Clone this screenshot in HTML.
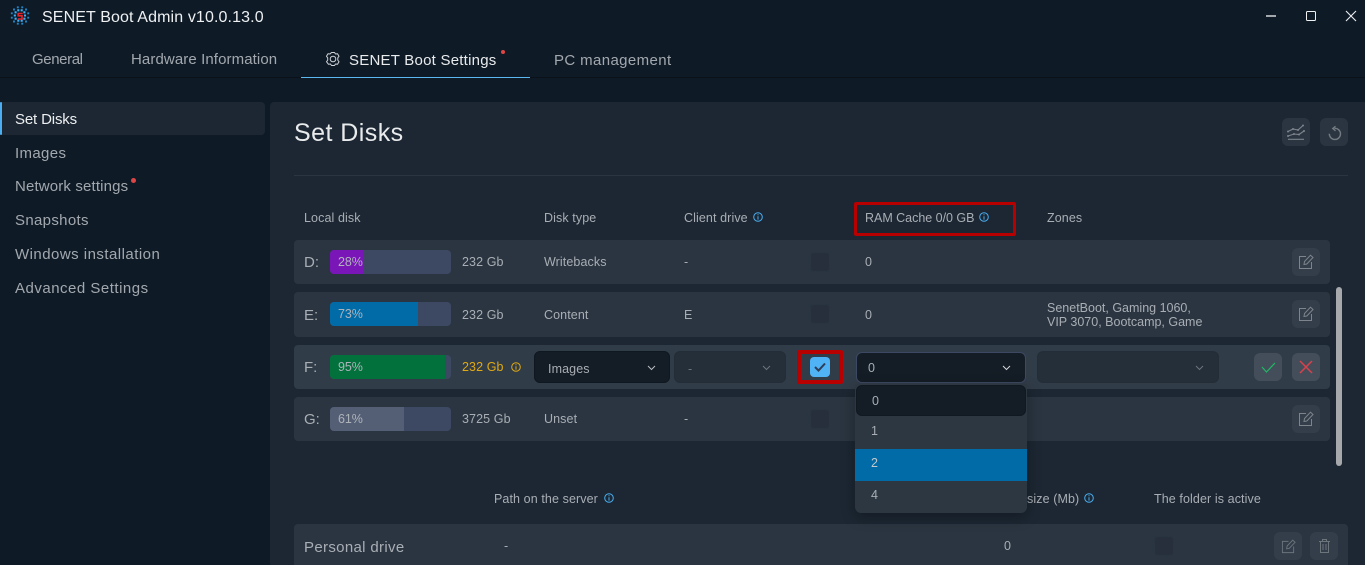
<!DOCTYPE html>
<html lang="en"><head><meta charset="utf-8"><title>SENET Boot Admin</title>
<style>
*{box-sizing:border-box}
html,body{margin:0;padding:0;width:1365px;height:565px;overflow:hidden;background:#0e1b27;font-family:"Liberation Sans",sans-serif}
.a,.t{position:absolute}
.t{white-space:nowrap;color:#a9aeb4;font-size:12.5px;line-height:16px;letter-spacing:.1px}
.m{font-size:15px;line-height:18px}
.row{position:absolute;left:294px;width:1036px;background:#2a3541;border-radius:4px}
.bar{position:absolute;left:330px;width:121px;height:24px;background:#3d4863;border-radius:4px;overflow:hidden}
.bar i{position:absolute;left:0;top:0;height:24px;display:block}
.bar b{position:absolute;left:8px;top:4px;font-weight:400;font-size:12.5px;line-height:16px;color:#aeb3ba;letter-spacing:-.05px}
.cb{position:absolute;width:20px;height:20px;border-radius:4px;background:#262f3b;border:1px solid #283440}
.btn{position:absolute;width:28px;height:28px;border-radius:6px;background:#333e4a}
.sel{position:absolute;height:32px;border-radius:6px;background:#141c25;border:1px solid #0f1720}
.sel2{background:#252f39;border-color:#232d37}
svg{position:absolute;display:block;overflow:visible}
</style></head><body>

<!-- logo -->
<svg style="left:10px;top:6px" width="20" height="20" viewBox="0 0 20 20" fill="none">
<path stroke="#3fb0f5" stroke-width="2.100" stroke-linecap="square" d="M15 9.500h.01M14.400 12.700h.01M11.700 14.700h.01M8.300 14.700h.01M5.600 12.700h.01M4.800 9.500h.01M5.600 6.300h.01M8.300 4.300h.01M11.700 4.300h.01M14.400 6.300h.01"/>
<path stroke="#1f86c8" stroke-width="1.900" stroke-linecap="square" d="M18.200 11.700h.01M16 15.500h.01M12.200 17.700h.01M7.800 17.700h.01M4 15.500h.01M1.800 11.700h.01M1.800 7.300h.01M4 3.500h.01M7.800 1.300h.01M12.200 1.300h.01M16 3.500h.01M18.200 7.300h.01"/>
<path d="M12.700 7.500H8.200V9.800H12V13H7.800" stroke="#e8242a" stroke-width="1.600"/>
</svg>
<div class="t" style="left:42px;top:8px;font-size:16px;line-height:20px;color:#eef0f2;letter-spacing:.12px">SENET Boot Admin v10.0.13.0</div>

<!-- window controls -->
<div class="a" style="left:1266px;top:15px;width:10px;height:1.500px;background:#a3a8ad"></div>
<div class="a" style="left:1306px;top:11px;width:10px;height:10px;border:1.300px solid #eef0f2;border-radius:1.500px"></div>
<svg style="left:1346px;top:11px" width="10" height="10" viewBox="0 0 10 10"><path d="M0 0L10 10M10 0L0 10" stroke="#eef0f2" stroke-width="1.100"/></svg>

<!-- tabs -->
<div class="t m" style="left:32px;top:51px;color:#a3a8ae;letter-spacing:-.4px">General</div>
<div class="t m" style="left:131px;top:51px;color:#a3a8ae;letter-spacing:.1px">Hardware Information</div>
<svg style="left:325px;top:51px" width="16" height="16" viewBox="0 0 16 16" fill="none" stroke="#cfd2d6" stroke-width="1" stroke-linejoin="round"><path d="M6.500 1.500h3l1 1.500 2-.3 1.500 2.600-1.200 1.500v2.400l1.200 1.500-1.500 2.600-2-.3-1 1.500h-3l-1-1.500-2 .3L1.500 10.700l1.200-1.500V6.800L1.500 5.300 3 2.700l2 .3z"/><circle cx="8" cy="8" r="2.800"/></svg>
<div class="t m" style="left:349px;top:52px;color:#e9ebed;letter-spacing:.23px">SENET Boot Settings</div>
<div class="a" style="left:501px;top:50px;width:4px;height:4px;border-radius:50%;background:#e04545"></div>
<div class="t m" style="left:554px;top:52px;color:#a3a8ae;letter-spacing:.38px">PC management</div>
<div class="a" style="left:0;top:77px;width:1365px;height:1px;background:#0a1118"></div>
<div class="a" style="left:301px;top:77px;width:229px;height:1px;background:#5cb8f0"></div>

<!-- sidebar -->
<div class="a" style="left:0;top:102px;width:265px;height:33px;background:#1c2733;border-radius:0 4px 4px 0"></div>
<div class="a" style="left:0;top:102px;width:2px;height:33px;background:#4aaef0;border-radius:2px"></div>
<div class="t m" style="left:15px;top:111px;color:#eceef0;letter-spacing:-.15px">Set Disks</div>
<div class="t m" style="left:15px;top:145px;letter-spacing:.35px;color:#a3a8ae">Images</div>
<div class="t m" style="left:15px;top:178px;letter-spacing:.15px;color:#a3a8ae">Network settings</div>
<div class="a" style="left:131px;top:178px;width:5px;height:5px;border-radius:50%;background:#e04545"></div>
<div class="t m" style="left:15px;top:212px;letter-spacing:.33px;color:#a3a8ae">Snapshots</div>
<div class="t m" style="left:15px;top:246px;letter-spacing:.47px;color:#a3a8ae">Windows installation</div>
<div class="t m" style="left:15px;top:280px;letter-spacing:.5px;color:#a3a8ae">Advanced Settings</div>

<!-- main panel -->
<div class="a" style="left:270px;top:102px;width:1095px;height:463px;background:#1c2733;border-radius:4px 0 0 0"></div>
<div class="t" style="left:294px;top:119px;font-size:25px;line-height:28px;color:#e8eaec;letter-spacing:.45px">Set Disks</div>
<div class="a" style="left:294px;top:175px;width:1054px;height:1px;background:#2a3541"></div>

<div class="btn" style="left:1282px;top:118px;background:#2a3541"></div>
<svg style="left:1287px;top:124px" width="18" height="16" viewBox="0 0 18 16" fill="none" stroke="#7d848c" stroke-width="1.100"><path d="M1 7.500L6 5L11 6L16 1.500"/><path d="M1 12L7 10L12 10.500L17 7"/><path d="M1 15.300H17"/><path stroke-width="2" stroke-linecap="round" d="M1 7.500h.01M6 5h.01M11 6h.01M16 1.500h.01M1 12h.01M7 10h.01M12 10.500h.01M17 7h.01"/></svg>
<div class="btn" style="left:1320px;top:118px;background:#2a3541"></div>
<svg style="left:1328px;top:126px" width="14" height="14" viewBox="0 0 14 14" fill="none" stroke="#737a82" stroke-width="1.400"><path d="M6.500 2.300A5.600 5.600 0 1 1 1.300 7.800"/><path d="M7.500 .3L4.800 2.500 7.500 4.800"/></svg>

<!-- column headers -->
<div class="t" style="left:304px;top:210px">Local disk</div>
<div class="t" style="left:544px;top:210px">Disk type</div>
<div class="t" style="left:684px;top:210px">Client drive</div>
<svg style="left:753px;top:212px" width="10" height="10" viewBox="0 0 10 10" fill="none" stroke="#4aaef0"><circle cx="5" cy="5" r="4.300"/><path d="M5 4.200V7.600M5 2.300V3.300"/></svg>
<div class="a" style="left:854px;top:202px;width:162px;height:34px;border:3px solid #b80000;border-radius:2px"></div>
<div class="t" style="left:865px;top:210px;letter-spacing:-.02px">RAM Cache 0/0 GB</div>
<svg style="left:979px;top:212px" width="10" height="10" viewBox="0 0 10 10" fill="none" stroke="#4aaef0"><circle cx="5" cy="5" r="4.300"/><path d="M5 4.200V7.600M5 2.300V3.300"/></svg>
<div class="t" style="left:1047px;top:210px">Zones</div>

<!-- rows -->
<div class="row" style="top:240px;height:44px"></div>
<div class="row" style="top:292px;height:45px"></div>
<div class="row" style="top:345px;height:44px;background:#313c49"></div>
<div class="row" style="top:397px;height:44px"></div>

<!-- D -->
<div class="t" style="left:304px;top:254px;font-size:15px;line-height:18px;letter-spacing:0">D:</div>
<div class="bar" style="top:250px"><i style="width:34px;background:#7a16b8"></i><b>28%</b></div>
<div class="t" style="left:462px;top:254px">232 Gb</div>
<div class="t" style="left:544px;top:254px">Writebacks</div>
<div class="t" style="left:684px;top:254px">-</div>
<div class="cb" style="left:810px;top:252px"></div>
<div class="t" style="left:865px;top:254px">0</div>
<div class="btn" style="left:1292px;top:248px"></div>

<!-- E -->
<div class="t" style="left:304px;top:307px;font-size:15px;line-height:18px;letter-spacing:0">E:</div>
<div class="bar" style="top:302px"><i style="width:88px;background:#006ba6"></i><b>73%</b></div>
<div class="t" style="left:462px;top:307px">232 Gb</div>
<div class="t" style="left:544px;top:307px">Content</div>
<div class="t" style="left:684px;top:307px">E</div>
<div class="cb" style="left:810px;top:304px"></div>
<div class="t" style="left:865px;top:307px">0</div>
<div class="t" style="left:1047px;top:301px;line-height:14px;letter-spacing:0">SenetBoot, Gaming 1060,<br>VIP 3070, Bootcamp, Game</div>
<div class="btn" style="left:1292px;top:300px"></div>

<!-- F -->
<div class="t" style="left:304px;top:359px;font-size:15px;line-height:18px;letter-spacing:0">F:</div>
<div class="bar" style="top:355px"><i style="width:115px;background:#02713b"></i><b>95%</b></div>
<div class="t" style="left:462px;top:359px;color:#e0a911">232 Gb</div>
<svg style="left:511px;top:362px" width="10" height="10" viewBox="0 0 10 10" fill="none" stroke="#e0a911"><circle cx="5" cy="5" r="4.300"/><path d="M5 4.200V7.600M5 2.300V3.300"/></svg>
<div class="sel" style="left:534px;top:351px;width:136px"></div>
<div class="t" style="left:548px;top:361px">Images</div>
<svg style="left:647px;top:365px" width="9" height="6" viewBox="0 0 9 6" fill="none" stroke="#b9bdc2" stroke-width="1"><path d="M1 1L4.500 4.500L8 1"/></svg>
<div class="sel sel2" style="left:674px;top:351px;width:112px"></div>
<div class="t" style="left:688px;top:361px;color:#6c747c">-</div>
<svg style="left:762px;top:365px" width="9" height="6" viewBox="0 0 9 6" fill="none" stroke="#6c747c" stroke-width="1"><path d="M1 1L4.500 4.500L8 1"/></svg>
<div class="a" style="left:797px;top:350px;width:46px;height:34px;border:4px solid #b80000;border-radius:2px"></div>
<div class="a" style="left:810px;top:357px;width:20px;height:20px;border-radius:4px;background:#4fb3f6"></div>
<svg style="left:814px;top:362px" width="12" height="10" viewBox="0 0 12 10" fill="none" stroke="#2f3d57" stroke-width="2"><path d="M1 5L4.500 8.500L11 1.500"/></svg>
<div class="sel" style="left:856px;top:352px;width:170px;height:31px;border-color:#3d4863;background:#141c25"></div>
<div class="t" style="left:868px;top:360px">0</div>
<svg style="left:1002px;top:365px" width="9" height="6" viewBox="0 0 9 6" fill="none" stroke="#d5d8db" stroke-width="1"><path d="M1 1L4.500 4.500L8 1"/></svg>
<div class="sel sel2" style="left:1037px;top:351px;width:182px"></div>
<svg style="left:1195px;top:365px" width="9" height="6" viewBox="0 0 9 6" fill="none" stroke="#6c747c" stroke-width="1"><path d="M1 1L4.500 4.500L8 1"/></svg>
<div class="btn" style="left:1254px;top:353px;background:#434e5a"></div>
<svg style="left:1261px;top:361px" width="15" height="13" viewBox="0 0 15 13" fill="none" stroke="#1fb866" stroke-width="1.200"><path d="M1 6L5.500 11L14 2"/></svg>
<div class="btn" style="left:1292px;top:353px;background:#434e5a"></div>
<svg style="left:1300px;top:361px" width="12" height="12" viewBox="0 0 12 12" fill="none" stroke="#d9414b" stroke-width="1.500"><path d="M0 0L12 12M12 0L0 12"/></svg>

<!-- G -->
<div class="t" style="left:304px;top:411px;font-size:15px;line-height:18px;letter-spacing:0">G:</div>
<div class="bar" style="top:407px"><i style="width:74px;background:#545f75"></i><b>61%</b></div>
<div class="t" style="left:462px;top:411px">3725 Gb</div>
<div class="t" style="left:544px;top:411px">Unset</div>
<div class="t" style="left:684px;top:411px">-</div>
<div class="cb" style="left:810px;top:409px"></div>
<div class="btn" style="left:1292px;top:405px"></div>

<!-- edit icons -->
<svg style="left:1298px;top:254px" width="16" height="16" viewBox="0 0 16 16" fill="none" stroke="#7d848c" stroke-width="1"><path d="M8 2.500H1.500V14.500H13.500V8"/><path d="M6 10.500L6.500 7.500L12.500 1.200L15 3.500L8.800 10z"/></svg>
<svg style="left:1298px;top:306px" width="16" height="16" viewBox="0 0 16 16" fill="none" stroke="#7d848c" stroke-width="1"><path d="M8 2.500H1.500V14.500H13.500V8"/><path d="M6 10.500L6.500 7.500L12.500 1.200L15 3.500L8.800 10z"/></svg>
<svg style="left:1298px;top:411px" width="16" height="16" viewBox="0 0 16 16" fill="none" stroke="#7d848c" stroke-width="1"><path d="M8 2.500H1.500V14.500H13.500V8"/><path d="M6 10.500L6.500 7.500L12.500 1.200L15 3.500L8.800 10z"/></svg>

<!-- scrollbar -->
<div class="a" style="left:1336px;top:287px;width:6px;height:179px;background:#a6a8ab;border-radius:3px"></div>

<!-- second table -->
<div class="t" style="left:494px;top:491px">Path on the server</div>
<svg style="left:604px;top:493px" width="10" height="10" viewBox="0 0 10 10" fill="none" stroke="#4aaef0"><circle cx="5" cy="5" r="4.300"/><path d="M5 4.200V7.600M5 2.300V3.300"/></svg>
<div class="t" style="left:1027px;top:491px">size (Mb)</div>
<svg style="left:1084px;top:493px" width="10" height="10" viewBox="0 0 10 10" fill="none" stroke="#4aaef0"><circle cx="5" cy="5" r="4.300"/><path d="M5 4.200V7.600M5 2.300V3.300"/></svg>
<div class="t" style="left:1154px;top:491px">The folder is active</div>
<div class="row" style="top:524px;height:41px;width:1054px;border-radius:4px 4px 0 0"></div>
<div class="t" style="left:304px;top:538px;font-size:15px;line-height:20px;letter-spacing:.33px">Personal drive</div>
<div class="t" style="left:504px;top:538px">-</div>
<div class="t" style="left:1004px;top:538px">0</div>
<div class="cb" style="left:1154px;top:536px"></div>
<div class="btn" style="left:1274px;top:532px"></div>
<svg style="left:1281px;top:539px" width="15" height="15" viewBox="0 0 16 16" fill="none" stroke="#6c747c" stroke-width="1"><path d="M8 2.500H1.500V14.500H13.500V8"/><path d="M6 10.500L6.500 7.500L12.500 1.200L15 3.500L8.800 10z"/></svg>
<div class="btn" style="left:1310px;top:532px"></div>
<svg style="left:1319px;top:539px" width="11" height="14" viewBox="0 0 11 14" fill="none" stroke="#6c747c" stroke-width="1"><path d="M0 2.500H11M3.500 2.500V.5H7.500V2.500M1.500 2.500V13.500H9.500V2.500M4 5V11M7 5V11"/></svg>

<!-- dropdown -->
<div class="a" style="left:855px;top:384px;width:172px;height:129px;background:#2c3742;border-radius:0 0 6px 6px;box-shadow:0 4px 14px rgba(0,0,0,.3)"></div>
<div class="a" style="left:856px;top:385px;width:170px;height:31px;background:#141c25;border-radius:6px;border:1px solid #101820"></div>
<div class="a" style="left:855px;top:449px;width:172px;height:32px;background:#006ba6"></div>
<div class="t" style="left:872px;top:393px">0</div>
<div class="t" style="left:871px;top:423px">1</div>
<div class="t" style="left:871px;top:455px;color:#c2c8ce">2</div>
<div class="t" style="left:871px;top:487px">4</div>

</body></html>
